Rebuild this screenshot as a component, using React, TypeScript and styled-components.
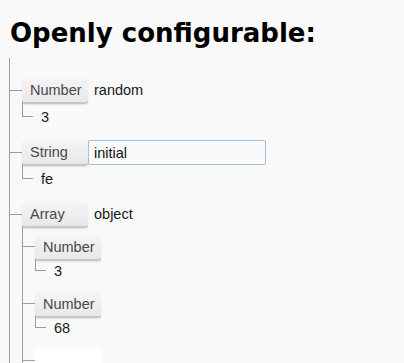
import React from 'react';
import styled, { createGlobalStyle } from 'styled-components';

type Item =
  | { kind: 'node'; type: string; value?: string; input?: string; blank?: boolean; children: Item[] }
  | { kind: 'leaf'; text: string };

const data: Item[] = [
  { kind: 'node', type: 'Number', value: 'random', children: [{ kind: 'leaf', text: '3' }] },
  { kind: 'node', type: 'String', input: 'initial', children: [{ kind: 'leaf', text: 'fe' }] },
  {
    kind: 'node',
    type: 'Array',
    value: 'object',
    children: [
      { kind: 'node', type: 'Number', children: [{ kind: 'leaf', text: '3' }] },
      { kind: 'node', type: 'Number', children: [{ kind: 'leaf', text: '68' }] },
      { kind: 'node', type: '', blank: true, children: [] },
    ],
  },
];

const line = '#9c9c9c';

const GlobalStyle = createGlobalStyle`
  html, body {
    margin: 0;
    padding: 0;
    background: #f9f9f9;
  }
  body {
    width: 404px;
    height: 363px;
    overflow: hidden;
    font-family: 'Liberation Sans', Arial, sans-serif;
  }
`;

const Page = styled.div`
  display: flex;
  flex-direction: column;
`;

const Title = styled.h1`
  margin: 0;
  padding: 18px 0 0 10px;
  font-family: 'DejaVu Sans', Verdana, sans-serif;
  font-size: 26px;
  font-weight: bold;
  line-height: 30px;
  color: #000;
`;

const Tree = styled.div`
  margin: 10px 0 0 9px;
  padding-top: 20px;
  border-left: 1px solid ${line};
  display: flex;
  flex-direction: column;
  gap: 8px;
`;

const Header = styled.div`
  display: flex;
  align-items: flex-start;
  height: 24px;
`;

const Branch = styled.span`
  flex: none;
  width: 12px;
  height: 1px;
  margin-top: 12px;
  background: ${line};
`;

const Badge = styled.div<{ $blank?: boolean }>`
  flex: none;
  box-sizing: border-box;
  width: 66px;
  height: 24px;
  padding-left: 8px;
  border-radius: 3px;
  background: ${(p) => (p.$blank ? '#fff' : 'linear-gradient(#f5f5f5, #e8e8e8)')};
  box-shadow: ${(p) => (p.$blank ? 'none' : '0 2px 0 #c6c6c6, 0 3px 2px rgba(0, 0, 0, 0.1)')};
  font-size: 14.5px;
  line-height: 24px;
  color: #484848;
`;

const Value = styled.span`
  margin-left: 6px;
  font-size: 14.5px;
  line-height: 24px;
  color: #1a1a1a;
`;

const Field = styled.input`
  box-sizing: border-box;
  width: 178px;
  height: 25px;
  margin: 0;
  padding: 0 5px;
  border: 1px solid #a7c3da;
  border-radius: 2px;
  background: #f9fafc;
  box-shadow: 0 0 1px #cfe0ee;
  font-family: 'Liberation Sans', Arial, sans-serif;
  font-size: 14.5px;
  color: #111;
  outline: none;
`;

const Children = styled.div<{ $indent: number }>`
  display: flex;
  flex-direction: column;
  margin-left: ${(p) => p.$indent}px;
`;

const Row = styled.div`
  display: flex;
  align-items: stretch;
`;

const Elbow = styled.div<{ $width: number }>`
  flex: none;
  display: flex;
  flex-direction: column;
  width: ${(p) => p.$width}px;
`;

const ElbowTop = styled.div<{ $height: number }>`
  box-sizing: border-box;
  height: ${(p) => p.$height}px;
  border-left: 1px solid ${line};
  border-bottom: 1px solid ${line};
`;

const ElbowRest = styled.div<{ $last?: boolean }>`
  flex: 1;
  border-left: 1px solid ${(p) => (p.$last ? 'transparent' : line)};
`;

const Leaf = styled.span<{ $height: number }>`
  margin-left: 8px;
  height: ${(p) => p.$height}px;
  font-size: 14.5px;
  line-height: ${(p) => p.$height}px;
  color: #1a1a1a;
`;

const NestedBody = styled.div`
  display: flex;
  flex-direction: column;
  padding-top: 9px;
`;

const NodeHeader = ({ item, top }: { item: Extract<Item, { kind: 'node' }>; top?: boolean }) => (
  <Header>
    {top && <Branch />}
    <Badge $blank={item.blank}>{item.type}</Badge>
    {item.value && <Value>{item.value}</Value>}
    {item.input !== undefined && <Field defaultValue={item.input} />}
  </Header>
);

const ChildList = ({ items, leafHeight, indent }: { items: Item[]; leafHeight: number; indent: number }) => (
  <Children $indent={indent}>
    {items.map((child, i) => {
      const last = i === items.length - 1;
      if (child.kind === 'leaf') {
        return (
          <Row key={i}>
            <Elbow $width={11}>
              <ElbowTop $height={leafHeight / 2} />
              <ElbowRest $last={last} />
            </Elbow>
            <Leaf $height={leafHeight}>{child.text}</Leaf>
          </Row>
        );
      }
      return (
        <Row key={i}>
          <Elbow $width={13}>
            <ElbowTop $height={21} />
            <ElbowRest $last={false} />
          </Elbow>
          <NestedBody>
            <NodeHeader item={child} />
            {child.children.length > 0 && <ChildList items={child.children} leafHeight={24} indent={0} />}
          </NestedBody>
        </Row>
      );
    })}
  </Children>
);

const TopNode = styled.div`
  display: flex;
  flex-direction: column;
`;

const App = () => (
  <Page>
    <GlobalStyle />
    <Title>Openly configurable:</Title>
    <Tree>
      {data.map((item, i) =>
        item.kind === 'node' ? (
          <TopNode key={i}>
            <NodeHeader item={item} top />
            <ChildList items={item.children} leafHeight={30} indent={12} />
          </TopNode>
        ) : null
      )}
    </Tree>
  </Page>
);

export default App;
